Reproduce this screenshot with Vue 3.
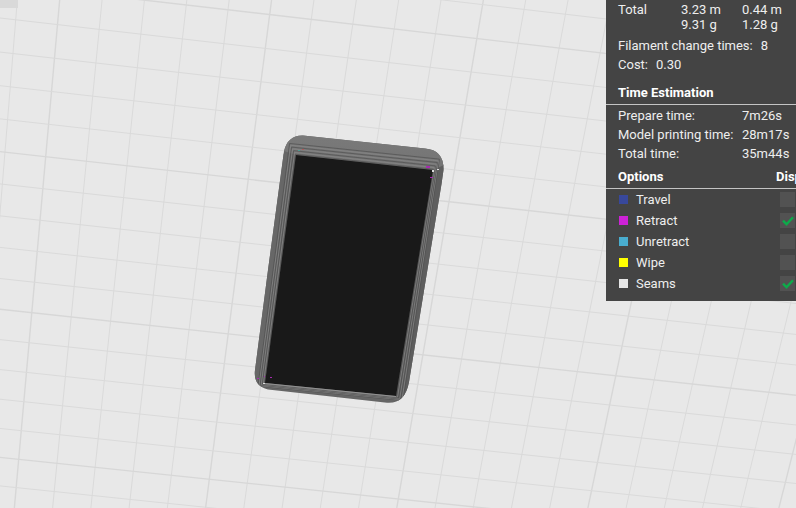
<script setup>
import { ref } from 'vue'

// Corners of a 10 x 10 cell patch of the build plate, in scene units.
const corners = [
  [45.7, 156.7],
  [449, 201.7],
  [398.3, 499],
  [18.7, 459.3],
]

// Perspective mapping of the unit square onto the four corners.
function perspective([[x0, y0], [x1, y1], [x2, y2], [x3, y3]]) {
  const dx1 = x1 - x2
  const dx2 = x3 - x2
  const dx3 = x0 - x1 + x2 - x3
  const dy1 = y1 - y2
  const dy2 = y3 - y2
  const dy3 = y0 - y1 + y2 - y3
  const det = dx1 * dy2 - dx2 * dy1
  const g = (dx3 * dy2 - dx2 * dy3) / det
  const h = (dx1 * dy3 - dx3 * dy1) / det
  return (u, v) => {
    const w = g * u + h * v + 1
    return [
      ((x1 - x0 + g * x1) * u + (x3 - x0 + h * x3) * v + x0) / w,
      ((y1 - y0 + g * y1) * u + (y3 - y0 + h * y3) * v + y0) / w,
    ]
  }
}

const project = perspective(corners)
const cell = (i, j) => project(i / 10, (j - 5) / 10)

const gridLines = []
function addLine(from, to, index) {
  const [x1, y1] = cell(...from)
  const [x2, y2] = cell(...to)
  gridLines.push({ x1, y1, x2, y2, major: index % 5 === 0 })
}
for (let i = -3; i <= 25; i++) addLine([i, -6], [i, 19], i)
for (let j = -6; j <= 19; j++) addLine([-3, j], [25, j], j)

// Printed wall layers between the outer shell and the dark top surface.
const outer = [[286, 137], [443, 153], [407, 403], [254, 388]]
const inner = [[296, 155], [433, 170], [396, 396], [265, 383]]
const layers = [0.36, 0.46, 0.56, 0.66, 0.76, 0.86, 0.96].map((t) =>
  outer.map(([x, y], k) => [x + (inner[k][0] - x) * t, y + (inner[k][1] - y) * t].join(',')).join(' ')
)

const times = [
  ['Prepare time:', '7m26s'],
  ['Model printing time:', '28m17s'],
  ['Total time:', '35m44s'],
]

const options = ref([
  { id: 'travel', label: 'Travel', on: false },
  { id: 'retract', label: 'Retract', on: true },
  { id: 'unretract', label: 'Unretract', on: false },
  { id: 'wipe', label: 'Wipe', on: false },
  { id: 'seams', label: 'Seams', on: true },
])
</script>

<template>
  <main class="preview">
    <svg class="scene" viewBox="0 0 796 508" preserveAspectRatio="xMinYMin slice" aria-hidden="true">
      <defs>
        <clipPath id="shell-clip">
          <path d="M303 135.500L425 148.500Q444 150 443.500 170L441.500 184L409 382Q405 404 387 402.700L268 389.500Q253 386 255 370L268 270L284 151Q288 135 303 135.500Z" />
        </clipPath>
        <linearGradient id="top-wall" x1="0" y1="0" x2="0" y2="1">
          <stop offset="0" stop-color="#7c7c7c" />
          <stop offset="1" stop-color="#747474" />
        </linearGradient>
      </defs>
      <line
        v-for="(l, k) in gridLines"
        :key="k"
        :x1="l.x1"
        :y1="l.y1"
        :x2="l.x2"
        :y2="l.y2"
        :class="l.major ? 'grid-major' : 'grid-minor'"
      />
      <rect width="18" height="8" fill="#d9d9d9" />
      <g clip-path="url(#shell-clip)">
        <rect x="250" y="130" width="200" height="280" fill="#666" />
        <path d="M270 120H460V160L433 170L296 155L284 151Z" fill="url(#top-wall)" />
        <path d="M460 158L433 170L396 396L402 410H460Z" fill="#5e5e5e" />
        <path d="M296 155L265 383L250 390V150Z" fill="#676767" />
        <polygon
          v-for="(p, k) in layers"
          :key="k"
          :points="p"
          :class="k % 2 ? 'layer-light' : 'layer-dark'"
        />
      </g>
      <path d="M296 155L433 170L396 396L265 383Z" fill="#191919" />
      <path d="M265 383.500L396 396.500" stroke="#929292" stroke-width="1" />
      <g fill="#a62bb0">
        <rect x="426" y="166" width="4" height="2" />
        <rect x="430" y="177" width="3" height="1" />
        <rect x="257" y="378" width="2" height="1" />
        <rect x="270" y="377" width="2" height="1" />
        <rect x="264" y="376" width="1" height="1" />
      </g>
      <rect x="302" y="149" width="2" height="1" fill="#b05a5a" />
      <rect x="298" y="150" width="2" height="1" fill="#4c9c92" />
      <g fill="#dedede">
        <rect x="432" y="170" width="2" height="2" />
        <rect x="437" y="169" width="2" height="1" />
        <rect x="263" y="383" width="2" height="1" />
      </g>
    </svg>

    <aside class="panel">
      <table class="totals">
        <tbody>
          <tr>
            <th scope="row">Total</th>
            <td>3.23 m</td>
            <td>0.44 m</td>
          </tr>
          <tr>
            <td></td>
            <td>9.31 g</td>
            <td>1.28 g</td>
          </tr>
        </tbody>
      </table>
      <dl class="facts">
        <div class="fact"><dt>Filament change times:</dt><dd>8</dd></div>
        <div class="fact"><dt>Cost:</dt><dd>0.30</dd></div>
      </dl>

      <h2 class="heading">Time Estimation</h2>
      <dl class="times">
        <div v-for="[name, value] in times" :key="name" class="time">
          <dt>{{ name }}</dt>
          <dd>{{ value }}</dd>
        </div>
      </dl>

      <table class="options">
        <thead>
          <tr>
            <th scope="col" class="name-col">Options</th>
            <th scope="col">Display</th>
          </tr>
        </thead>
        <tbody>
          <tr v-for="o in options" :key="o.id">
            <td>
              <label class="option" :for="o.id">
                <span class="swatch" :class="o.id"></span>{{ o.label }}
              </label>
            </td>
            <td>
              <span class="toggle">
                <input :id="o.id" v-model="o.on" type="checkbox" />
                <svg v-if="o.on" class="tick" viewBox="0 0 15 15" aria-hidden="true">
                  <path d="M3 7.700L6.500 11.200L13 4.300" />
                </svg>
              </span>
            </td>
          </tr>
        </tbody>
      </table>
    </aside>
  </main>
</template>

<style>
body {
  margin: 0;
  background: #e8e8e8;
}
</style>

<style scoped>
.preview {
  position: relative;
  display: flex;
  justify-content: flex-end;
  align-items: flex-start;
  min-height: 100vh;
  overflow: hidden;
  background: #e8e8e8;
}
.scene {
  position: absolute;
  inset: 0;
  width: 100%;
  height: 100%;
}
.grid-minor {
  stroke: #dadada;
  stroke-width: 1;
}
.grid-major {
  stroke: #d7d7d7;
  stroke-width: 1.4;
}
.layer-dark,
.layer-light {
  fill: none;
  stroke: #505050;
  stroke-width: 0.7;
}
.layer-light {
  stroke: #888;
}
.panel {
  position: relative;
  box-sizing: border-box;
  width: 190px;
  padding: 2px 0 7px;
  overflow: hidden;
  background: #444;
  color: #eee;
  font-family: Roboto, "Liberation Sans", sans-serif;
  font-size: 13px;
  white-space: nowrap;
}
table {
  width: 100%;
  border-collapse: collapse;
  table-layout: fixed;
}
th,
td {
  padding: 0;
  text-align: left;
  font-weight: 400;
}
dl,
dd {
  margin: 0;
}
.totals {
  line-height: 15px;
}
.totals th {
  width: 75px;
  box-sizing: border-box;
  padding-left: 12px;
}
.totals td:nth-child(2) {
  width: 61px;
}
.facts {
  padding: 4px 0 7px 12px;
  line-height: 19px;
}
.fact {
  display: flex;
  gap: 8px;
}
.heading,
.options th {
  border-bottom: 1px solid #c4c4c4;
  color: #fff;
  font-size: 13px;
  font-weight: 700;
  line-height: 23px;
}
.heading {
  margin: 0;
  padding-left: 12px;
}
.times {
  padding: 1px 0 2px 12px;
  line-height: 19px;
}
.time {
  display: grid;
  grid-template-columns: 124px 1fr;
}
.options {
  border-collapse: separate;
  border-spacing: 0;
  line-height: 21px;
}
.options .name-col {
  width: 158px;
  padding-left: 12px;
}
.option {
  display: flex;
  align-items: center;
  gap: 8px;
  padding-left: 13px;
}
.swatch {
  width: 9px;
  height: 9px;
}
.travel {
  background: #38489b;
}
.retract {
  background: #cd22d6;
}
.unretract {
  background: #49adcf;
}
.wipe {
  background: #ff0;
}
.seams {
  background: #e6e6e6;
}
.toggle {
  display: grid;
  width: 15px;
  padding-left: 4px;
}
.toggle input,
.tick {
  grid-area: 1 / 1;
  width: 15px;
  height: 15px;
}
.toggle input {
  margin: 0;
  appearance: none;
  background: #525252;
}
.tick {
  pointer-events: none;
  fill: none;
  stroke: #0cab4a;
  stroke-width: 2.4;
}
</style>
